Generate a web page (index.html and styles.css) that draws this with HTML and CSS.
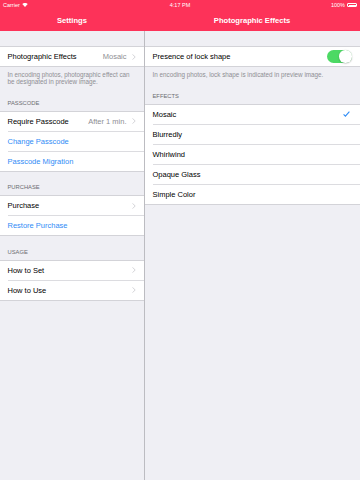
FILE: index.html
```html
<!DOCTYPE html>
<html lang="en">
<head>
    <meta charset="UTF-8">
    <meta name="viewport" content="width=device-width, initial-scale=1.0">
    <title>Settings</title>
    <link rel="stylesheet" href="styles.css">
</head>
<body>
    <div class="status-bar">
        <span class="carrier">Carrier
            <svg class="wifi" width="6" height="4" viewBox="0 0 12 8"><path d="M6 8 L0.5 2.2 A8 8 0 0 1 11.5 2.2 Z" fill="#fff"/></svg>
        </span>
        <span class="clock">4:17 PM</span>
        <span class="power">100% <span class="battery"><span class="battery-fill"></span></span></span>
    </div>

    <div class="split">
        <section class="pane master">
            <header class="nav-bar">Settings</header>
            <div class="pane-body">
                <ul class="group">
                    <li class="row">
                        <div class="cell">
                            <span class="label">Photographic Effects</span>
                            <span class="value">Mosaic</span>
                            <svg class="chevron" width="4" height="6" viewBox="0 0 4 6"><path d="M0.6 0.4 L3.2 3 L0.6 5.6" fill="none" stroke="#c7c7cc" stroke-width="0.8"/></svg>
                        </div>
                    </li>
                </ul>
                <p class="group-footer">In encoding photos, photographic effect can be designated in preview image.</p>

                <h2 class="group-header">Passcode</h2>
                <ul class="group">
                    <li class="row">
                        <div class="cell">
                            <span class="label">Require Passcode</span>
                            <span class="value">After 1 min.</span>
                            <svg class="chevron" width="4" height="6" viewBox="0 0 4 6"><path d="M0.6 0.4 L3.2 3 L0.6 5.6" fill="none" stroke="#c7c7cc" stroke-width="0.8"/></svg>
                        </div>
                    </li>
                    <li class="row">
                        <div class="cell"><span class="label link">Change Passcode</span></div>
                    </li>
                    <li class="row">
                        <div class="cell"><span class="label link">Passcode Migration</span></div>
                    </li>
                </ul>

                <h2 class="group-header">Purchase</h2>
                <ul class="group">
                    <li class="row">
                        <div class="cell">
                            <span class="label">Purchase</span>
                            <svg class="chevron" width="4" height="6" viewBox="0 0 4 6"><path d="M0.6 0.4 L3.2 3 L0.6 5.6" fill="none" stroke="#c7c7cc" stroke-width="0.8"/></svg>
                        </div>
                    </li>
                    <li class="row">
                        <div class="cell"><span class="label link">Restore Purchase</span></div>
                    </li>
                </ul>

                <h2 class="group-header">Usage</h2>
                <ul class="group">
                    <li class="row">
                        <div class="cell">
                            <span class="label">How to Set</span>
                            <svg class="chevron" width="4" height="6" viewBox="0 0 4 6"><path d="M0.6 0.4 L3.2 3 L0.6 5.6" fill="none" stroke="#c7c7cc" stroke-width="0.8"/></svg>
                        </div>
                    </li>
                    <li class="row">
                        <div class="cell">
                            <span class="label">How to Use</span>
                            <svg class="chevron" width="4" height="6" viewBox="0 0 4 6"><path d="M0.6 0.4 L3.2 3 L0.6 5.6" fill="none" stroke="#c7c7cc" stroke-width="0.8"/></svg>
                        </div>
                    </li>
                </ul>
            </div>
        </section>

        <section class="pane detail">
            <header class="nav-bar">Photographic Effects</header>
            <div class="pane-body">
                <ul class="group">
                    <li class="row">
                        <div class="cell">
                            <span class="label">Presence of lock shape</span>
                            <span class="switch on"><span class="knob"></span></span>
                        </div>
                    </li>
                </ul>
                <p class="group-footer">In encoding photos, lock shape is indicated in preview image.</p>

                <h2 class="group-header">Effects</h2>
                <ul class="group">
                    <li class="row">
                        <div class="cell">
                            <span class="label">Mosaic</span>
                            <svg class="check" width="7" height="6" viewBox="0 0 7 6"><path d="M0.6 3.4 L2.4 5.1 L6.4 0.6" fill="none" stroke="#2f8cf6" stroke-width="1.1"/></svg>
                        </div>
                    </li>
                    <li class="row"><div class="cell"><span class="label">Blurredly</span></div></li>
                    <li class="row"><div class="cell"><span class="label">Whirlwind</span></div></li>
                    <li class="row"><div class="cell"><span class="label">Opaque Glass</span></div></li>
                    <li class="row"><div class="cell"><span class="label">Simple Color</span></div></li>
                </ul>
            </div>
        </section>
    </div>
</body>
</html>
```

FILE: styles.css
```css
* {
    margin: 0;
    padding: 0;
    box-sizing: border-box;
}

html, body {
    height: 100%;
}

body {
    font-family: 'Liberation Sans', Arial, sans-serif;
    background: #efeff4;
    color: #000;
    display: flex;
    flex-direction: column;
    overflow: hidden;
}

/* Barra de estado */
.status-bar {
    height: 10px;
    background: #fd3259;
    color: #fff;
    font-size: 5.5px;
    display: grid;
    grid-template-columns: 1fr auto 1fr;
    align-items: center;
    padding: 0 3px 0 3px;
}

.carrier {
    display: flex;
    align-items: center;
    gap: 2px;
}

.clock {
    text-align: center;
}

.power {
    display: flex;
    align-items: center;
    justify-content: flex-end;
    gap: 2px;
}

.battery {
    width: 10px;
    height: 4px;
    border: 0.5px solid #fff;
    border-radius: 1px;
    padding: 0.5px;
    display: flex;
}

.battery-fill {
    flex: 1;
    background: #fff;
}

/* Paneles */
.split {
    flex: 1;
    display: flex;
}

.pane {
    display: flex;
    flex-direction: column;
}

.master {
    width: 144px;
}

.detail {
    flex: 1;
}

.nav-bar {
    height: 21px;
    background: #fd3259;
    color: #fff;
    font-size: 7.6px;
    font-weight: 700;
    display: flex;
    align-items: center;
    justify-content: center;
    padding-bottom: 1px;
}

.pane-body {
    flex: 1;
    padding-top: 15px;
}

.detail .pane-body {
    border-left: 1px solid #bcbcc1;
}

.group {
    list-style: none;
    background: #fff;
    border-top: 1px solid #d3d3d8;
    border-bottom: 1px solid #d3d3d8;
}

.row {
    padding-left: 7.5px;
}

.cell {
    height: 19px;
    display: flex;
    align-items: center;
    padding-right: 8.5px;
    font-size: 7.5px;
}

.row + .row .cell {
    height: 20px;
    border-top: 1px solid #dcdce0;
}

.label {
    flex: 1;
    white-space: nowrap;
}

.link {
    color: #2f8cf6;
}

.value {
    color: #8e8e93;
    margin-right: 5px;
}

.chevron {
    display: block;
}

.check {
    display: block;
    margin-right: 1.5px;
}

/* Interruptor */
.switch {
    width: 25px;
    height: 13.5px;
    border-radius: 7px;
    background: #4cd964;
    display: flex;
    align-items: center;
    justify-content: flex-end;
    padding: 0.5px;
    margin-right: -0.5px;
}

.knob {
    width: 12.5px;
    height: 12.5px;
    border-radius: 50%;
    background: #fff;
    box-shadow: 0 0.5px 1.5px rgba(0, 0, 0, 0.3);
}

.group-footer {
    font-size: 6.3px;
    line-height: 7px;
    color: #8e8e93;
    padding: 4px 7.5px 2px;
}

.group-header {
    font-size: 5.8px;
    font-weight: 400;
    line-height: 7px;
    color: #6d6d72;
    text-transform: uppercase;
    padding: 12.5px 7.5px 4px;
}
```
